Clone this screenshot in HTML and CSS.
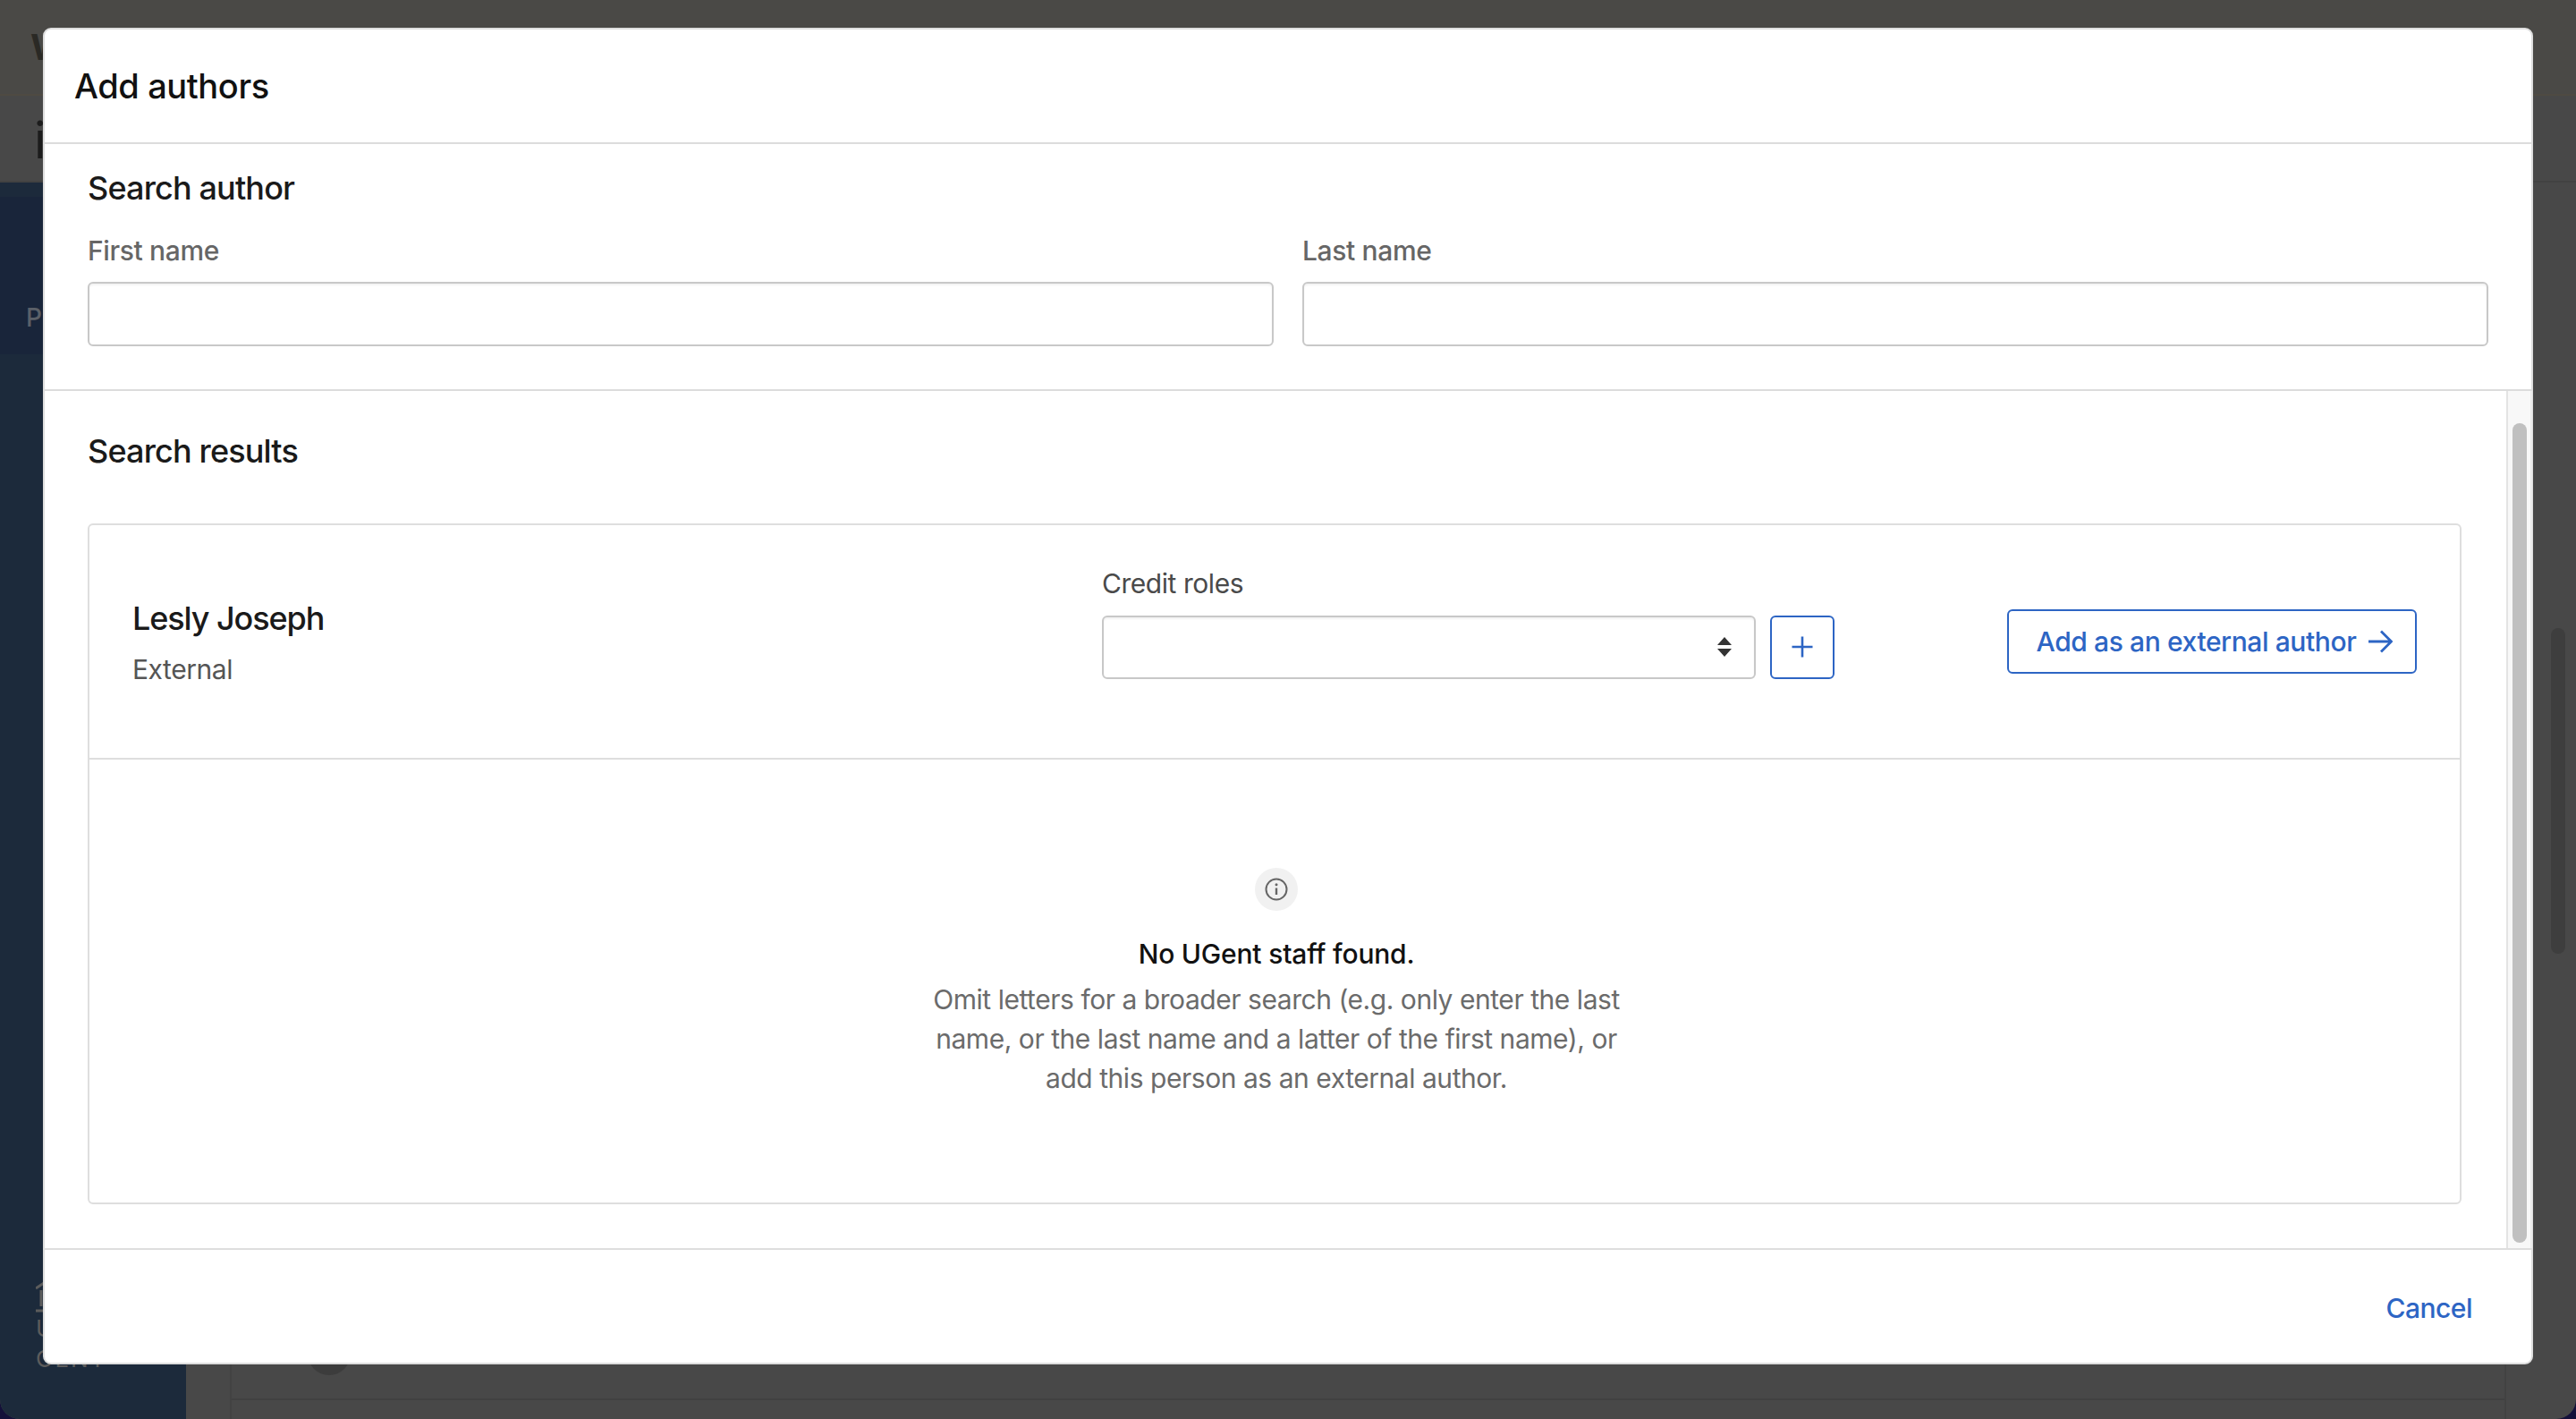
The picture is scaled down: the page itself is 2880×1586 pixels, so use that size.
FILE: index.html
```html
<!DOCTYPE html>
<html lang="en">
<head>
<meta charset="utf-8">
<title>Add authors</title>
<link rel="stylesheet" href="styles.css">
</head>
<body>
<div class="page">
  <div class="topbar"><span class="topbar-text">W</span></div>
  <div class="subbar"><span class="subbar-text">i</span></div>
  <div class="layout">
    <aside class="sidebar">
      <div class="side-item">Publications</div>
      <div class="side-logo">
        <svg class="side-logo-mark" width="30" height="40" viewBox="0 0 30 40" aria-hidden="true"><path d="M0 12 L15 2 L30 12 M6 14 V32 M14 14 V32 M0 37 H30" fill="none" stroke="#5c5c5c" stroke-width="3"/></svg>
        <div>UNI</div><div>GENT</div>
      </div>
    </aside>
    <main class="content">
      <div class="table">
        <div class="table-row"><span class="avatar"></span><span class="role">author</span></div>
        <div class="table-row"></div>
      </div>
      <div class="page-scroll"><div class="page-thumb"></div></div>
    </main>
  </div>
</div>

<div class="modal">
  <header class="modal-header"><h1 class="modal-title">Add authors</h1></header>
  <section class="search">
    <h2 class="section-title">Search author</h2>
    <div class="search-fields">
      <div class="field">
        <label class="field-label">First name</label>
        <input class="text-input" type="text">
      </div>
      <div class="field">
        <label class="field-label">Last name</label>
        <input class="text-input" type="text">
      </div>
    </div>
  </section>
  <div class="results-wrap">
    <section class="results">
      <h2 class="section-title results-title">Search results</h2>
      <div class="card">
        <div class="person">
          <div class="person-info">
            <div class="person-name">Lesly Joseph</div>
            <div class="person-meta">External</div>
          </div>
          <div class="roles">
            <div class="roles-label">Credit roles</div>
            <div class="roles-controls">
              <div class="select">
                <svg width="16" height="22" viewBox="0 0 16 22" aria-hidden="true"><path d="M8 0 L16 9 H0 Z M0 13 H16 L8 22 Z" fill="#333"/></svg>
              </div>
              <button class="icon-btn" type="button">
                <svg width="26" height="26" viewBox="0 0 26 26" aria-hidden="true"><path d="M13 1.5 V24.5 M1.5 13 H24.5" fill="none" stroke="#2d65c4" stroke-width="2.6"/></svg>
              </button>
            </div>
          </div>
          <button class="add-btn" type="button">Add as an external author
            <svg width="28" height="28" viewBox="0 0 28 28" aria-hidden="true"><path d="M1 14 H26 M15 2.5 L26.5 14 L15 25.5" fill="none" stroke="#2d65c4" stroke-width="2.8"/></svg>
          </button>
        </div>
        <div class="empty">
          <div class="empty-icon">
            <svg width="26" height="26" viewBox="0 0 26 26" aria-hidden="true"><circle cx="13" cy="13" r="11.5" fill="none" stroke="#666" stroke-width="2"/><path d="M13 11.5 V19" stroke="#666" stroke-width="2.4" fill="none"/><circle cx="13" cy="7.8" r="1.5" fill="#666"/></svg>
          </div>
          <div class="empty-title">No UGent staff found.</div>
          <p class="empty-text">Omit letters for a broader search (e.g. only enter the last name, or the last name and a latter of the first name), or add this person as an external author.</p>
        </div>
      </div>
    </section>
    <div class="scrolltrack"><div class="scrollthumb"></div></div>
  </div>
  <footer class="modal-footer"><a class="cancel">Cancel</a></footer>
</div>
</body>
</html>
```
FILE: styles.css
```css
* { box-sizing: border-box; }
html, body { margin: 0; height: 100%; }
body { background: #14103a; font-family: "Inter", "Liberation Sans", sans-serif; overflow: hidden; }

.page { height: 1586px; display: flex; flex-direction: column; border-radius: 0 0 22px 22px; overflow: hidden; background: #484848; }
.topbar { height: 107px; background: #4a4946; border-bottom: 2px solid #4f4a42; padding: 28px 0 0 34px; }
.topbar-text { font-size: 40px; font-weight: 700; color: #2a2925; }
.subbar { height: 97px; background: #484848; border-bottom: 2px solid #424242; padding: 16px 0 0 38px; }
.subbar-text { font-size: 56px; color: #1c1c1c; }
.layout { flex: 1; display: flex; }
.sidebar { width: 208px; background: #1c2a3b; display: flex; flex-direction: column; justify-content: space-between; padding: 16px 0 50px; }
.side-item { height: 176px; background: #19253a; color: #5b6068; font-size: 28px; font-weight: 500; padding: 118px 0 0 29px; white-space: nowrap; overflow: hidden; }
.side-logo { padding-left: 40px; color: #5c5c5c; font-size: 26px; line-height: 34px; letter-spacing: 2px; }
.side-logo-mark { display: block; }
.content { flex: 1; display: flex; padding-left: 49px; }
.table { flex: 1; border-left: 2px solid #424242; display: flex; flex-direction: column; justify-content: flex-end; }
.table-row { height: 21px; position: relative; }
.table-row:first-child { height: 60px; border-bottom: 2px solid #414141; padding-left: 85px; display: flex; justify-content: space-between; padding-right: 580px; }
.avatar { width: 48px; height: 48px; margin-top: -16px; border-radius: 50%; background: #3c3c3c; }
.role { font-size: 28px; color: #333; margin-top: -14px; }
.page-scroll { width: 80px; border-left: 2px solid #424242; margin-top: 490px; position: relative; padding-left: 50px; }
.page-thumb { width: 16px; height: 364px; margin-top: 8px; border-radius: 8px; background: #3e3e3e; }

.modal { position: absolute; top: 31px; left: 48px; width: 2784px; height: 1494px; background: #fff; border: 2px solid #dedede; border-radius: 9px; display: flex; flex-direction: column; }
.modal-header { height: 128px; border-bottom: 2px solid #dcdcdc; padding: 0 33px; display: flex; align-items: center; flex: none; }
.modal-title { margin: 0; font-size: 38px; letter-spacing: -0.4px; font-weight: 500; color: #111; }
.search { height: 276px; flex: none; border-bottom: 2px solid #dcdcdc; padding: 27px 48px 0; }
.section-title { margin: 0; font-size: 36px; line-height: 44px; letter-spacing: -0.85px; font-weight: 500; color: #1a1a1a; }
.search-fields { display: grid; grid-template-columns: 1fr 1fr; gap: 32px; margin-top: 28px; }
.field-label { display: block; font-size: 30px; line-height: 40px; letter-spacing: -0.35px; color: #666; font-weight: 500; }
.text-input { display: block; width: 100%; height: 72px; margin-top: 15px; border: 2px solid #c8c8c8; border-radius: 6px; background: #fff; box-shadow: inset 0 2px 2px rgba(0,0,0,.05); }

.results-wrap { flex: 1; display: flex; min-height: 0; }
.results { flex: 1; padding: 45px 50px 0 48px; }
.results-title { margin-bottom: 59px; }
.scrolltrack { width: 29px; background: #f8f8f8; border-left: 2px solid #e4e4e4; border-right: 2px solid #ececec; padding: 36px 4px 6px 5px; }
.scrollthumb { height: 100%; width: 16px; background: #c0c0c0; border-radius: 8px; }

.card { height: 761px; border: 2px solid #dedede; border-radius: 6px; display: flex; flex-direction: column; }
.person { height: 262px; flex: none; border-bottom: 2px solid #dedede; display: flex; align-items: center; padding: 0 48px; }
.person-info { width: 1084px; flex: none; }
.person-name { font-size: 36px; line-height: 50px; letter-spacing: -1.1px; font-weight: 500; color: #1a1a1a; padding-top: 2px; }
.person-meta { font-size: 30px; line-height: 44px; letter-spacing: -0.45px; margin-top: 10px; color: #555; }
.roles { width: 1011px; flex: none; padding-bottom: 44px; }
.roles-label { font-size: 30px; line-height: 40px; letter-spacing: -0.45px; color: #4a4a4a; }
.roles-controls { display: flex; gap: 16px; margin-top: 16px; }
.select { width: 731px; height: 71px; border: 2px solid #c8c8c8; border-radius: 6px; display: flex; align-items: center; justify-content: flex-end; padding-right: 25px; box-shadow: inset 0 2px 2px rgba(0,0,0,.05); }
.icon-btn { width: 72px; height: 71px; padding: 0; border: 2px solid #2d65c4; border-radius: 6px; background: #fff; display: flex; align-items: center; justify-content: center; }
.add-btn { width: 458px; height: 72px; flex: none; padding: 0 0 0 6px; border: 2px solid #2d65c4; border-radius: 6px; background: #fff; color: #2d65c4; font: 500 30px "Inter", "Liberation Sans", sans-serif; letter-spacing: -0.4px; display: flex; align-items: center; justify-content: center; gap: 13px; white-space: nowrap; margin-left: 1px; }

.empty { flex: 1; display: flex; flex-direction: column; align-items: center; padding: 121px 0 0 4px; }
.empty-icon { width: 48px; height: 48px; border-radius: 50%; background: #f1f1f1; display: flex; align-items: center; justify-content: center; }
.empty-title { font-size: 30px; line-height: 40px; letter-spacing: -0.2px; font-weight: 500; color: #111; margin-top: 28px; }
.empty-text { width: 800px; margin: 9px 0 0; font-size: 30px; line-height: 44px; letter-spacing: -0.46px; text-align: center; color: #6b6b6b; }

.modal-footer { flex: none; height: 128px; border-top: 2px solid #dedede; display: flex; align-items: center; justify-content: flex-end; padding: 4px 66px 0 0; }
.cancel { font-size: 30px; letter-spacing: -0.5px; font-weight: 500; color: #2d65c4; }
```
